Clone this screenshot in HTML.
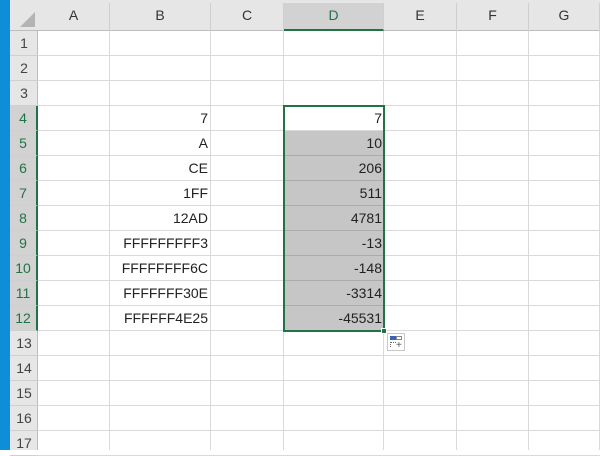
<!DOCTYPE html><html><head><style>
body{margin:0;width:600px;height:450px;overflow:hidden;background:#fff;font-family:"Liberation Sans","Noto Sans CJK JP",sans-serif;position:relative}
.a{position:absolute;box-sizing:border-box}
.t{font-size:14px;color:#222;line-height:25px}
</style></head><body>
<div class="a" style="left:0;top:0;width:10px;height:450px;background:#0e8ed8"></div>
<div class="a" style="left:10px;top:0;width:590px;height:31px;background:#e6e6e6;border-bottom:1px solid #bdbdbd"></div>
<div class="a" style="left:10px;top:31px;width:28px;height:419px;background:#e6e6e6;border-right:1px solid #bdbdbd"></div>
<svg class="a" style="left:18px;top:12px" width="18" height="16"><polygon points="17,0 17,15 2,15" fill="#b4b4b4"/></svg>
<div id="g"></div>
<script>
var cols=[38,110,211,284,384,457,529,600],names="ABCDEFG",h="";
var b="";
for(var i=0;i<7;i++){var x=cols[i],w=cols[i+1]-x,sel=i==3;
h+='<div class="a t" style="left:'+x+'px;top:3px;width:'+w+'px;height:28px;text-align:center;font-size:14px;'+(sel?'background:#d2d2d2;color:#217346;border-bottom:2px solid #217346;':'color:#333;')+'border-right:1px solid #cfcfcf">'+names[i]+'</div>';
h+='<div class="a" style="left:'+(cols[i+1]-1)+'px;top:31px;width:1px;height:419px;background:#d9d9d9"></div>';}
for(var r=1;r<=17;r++){var y=31+(r-1)*25,sel=r>=4&&r<=12;
h+='<div class="a t" style="left:10px;top:'+y+'px;width:28px;height:25px;text-align:center;font-size:14px;color:#444;'+(sel?'background:#d2d2d2;border-right:2px solid #217346;color:#217346;':'')+'border-bottom:1px solid #cfcfcf">'+r+'</div>';
h+='<div class="a" style="left:38px;top:'+(y+24)+'px;width:562px;height:1px;background:#d9d9d9"></div>';}
h+='<div class="a" style="left:284px;top:131px;width:100px;height:200px;background:#c6c6c6"></div>';
for(var r=5;r<=12;r++)h+='<div class="a" style="left:284px;top:'+(30+r*25)+'px;width:100px;height:1px;background:#ababab"></div>';
var B=["7","A","CE","1FF","12AD","FFFFFFFFF3","FFFFFFFF6C","FFFFFFF30E","FFFFFF4E25"],D=["7","10","206","511","4781","-13","-148","-3314","-45531"];
for(var k=0;k<9;k++){var y=106+k*25;
h+='<div class="a t" style="left:110px;top:'+y+'px;width:98px;text-align:right">'+B[k]+'</div>';
h+='<div class="a t" style="left:284px;top:'+y+'px;width:98px;text-align:right">'+D[k]+'</div>';}
h+='<div class="a" style="left:283px;top:105px;width:102px;height:227px;border:2px solid #217346"></div>';
h+='<div class="a" style="left:381px;top:328px;width:6px;height:6px;background:#217346;border:1px solid #fff"></div>';
document.getElementById("g").innerHTML=h;
</script>
<div class="a" style="left:387px;top:333px;width:18px;height:18px;background:#fff;border:1px solid #c8c8c8"></div>
<div class="a" style="left:390px;top:336px;width:6px;height:4px;background:#3b63b5"></div>
<div class="a" style="left:396px;top:336px;width:6px;height:4px;border:1px solid #888"></div>
<div class="a" style="left:390px;top:342px;width:6px;height:5px;border-top:1px dotted #666;border-left:1px dotted #666"></div>
<div class="a" style="left:396px;top:340px;font-size:10px;color:#555">+</div>
</body></html>
